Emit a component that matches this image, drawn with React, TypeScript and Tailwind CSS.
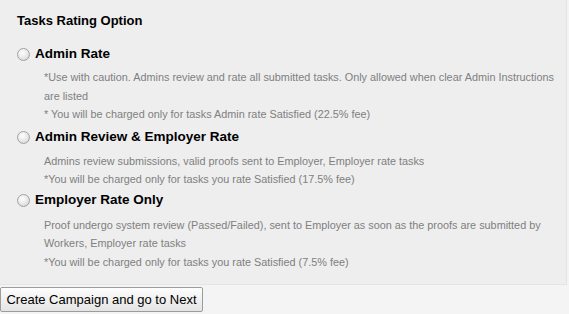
import React from "react";

type Option = {
  id: string;
  label: string;
  lines: string[];
  rowTop: string;
  descTop: string;
};

const options: Option[] = [
  {
    id: "admin",
    label: "Admin Rate",
    rowTop: "",
    descTop: "mt-[2px]",
    lines: [
      "*Use with caution. Admins review and rate all submitted tasks. Only allowed when clear Admin Instructions",
      "are listed",
      "* You will be charged only for tasks Admin rate Satisfied (22.5% fee)",
    ],
  },
  {
    id: "review",
    label: "Admin Review & Employer Rate",
    rowTop: "mt-[2px]",
    descTop: "mt-[2px]",
    lines: [
      "Admins review submissions, valid proofs sent to Employer, Employer rate tasks",
      "*You will be charged only for tasks you rate Satisfied (17.5% fee)",
    ],
  },
  {
    id: "employer",
    label: "Employer Rate Only",
    rowTop: "",
    descTop: "mt-[3px]",
    lines: [
      "Proof undergo system review (Passed/Failed), sent to Employer as soon as the proofs are submitted by",
      "Workers, Employer rate tasks",
      "*You will be charged only for tasks you rate Satisfied (7.5% fee)",
    ],
  },
];

function Radio() {
  return (
    <span className="block w-[13px] h-[13px] rounded-full border border-[#a2a2a2] bg-[radial-gradient(circle_at_40%_35%,#ffffff,#e4e4e4_60%,#c4c4c4)] shrink-0" />
  );
}

export default function App() {
  return (
    <div
      className="min-h-screen bg-[#f4f4f4] text-black"
      style={{ fontFamily: '"Liberation Sans", Arial, sans-serif' }}
    >
      <div className="w-[567px] h-[285px] bg-[#eeeeee] border-r border-b border-[#e4e4e4] pt-[11px]">
        <h3 className="pl-[17px] text-[13px] font-bold leading-[20px]">Tasks Rating Option</h3>

        <div className="mt-[11px]">
          {options.map((opt) => (
            <div key={opt.id} className={opt.rowTop}>
              <label className="flex items-center gap-[5px] pl-[17px] h-[24px] cursor-pointer">
                <Radio />
                <span className="text-[13.5px] font-bold">{opt.label}</span>
              </label>
              <div className={`${opt.descTop} pl-[44px] text-[10.85px] leading-[18.5px] text-[#808080]`}>
                {opt.lines.map((line) => (
                  <div key={line} className="whitespace-nowrap">
                    {line}
                  </div>
                ))}
              </div>
            </div>
          ))}
        </div>
      </div>

      <button className="mt-[2px] h-[25px] w-[203px] border border-[#9c9c9c] rounded-[2px] bg-gradient-to-b from-[#fdfdfd] to-[#e4e4e4] text-[13px] text-black">
        Create Campaign and go to Next
      </button>
    </div>
  );
}
